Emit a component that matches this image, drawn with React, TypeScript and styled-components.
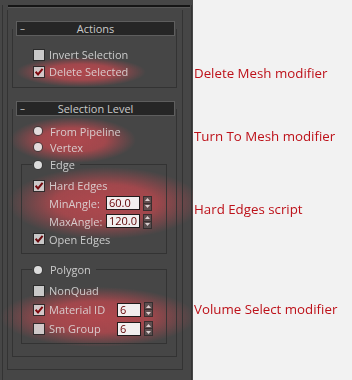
import React from 'react';
import styled, { createGlobalStyle, css } from 'styled-components';

const Global = createGlobalStyle`
  html, body { margin: 0; padding: 0; background: #f2f2f2; }
  #root { width: 352px; height: 380px; }
`;

const Page = styled.div`
  display: flex;
  width: 352px;
  height: 380px;
  background: #f2f2f2;
  overflow: hidden;
`;

const Panel = styled.div`
  position: relative;
  flex: none;
  width: 193px;
  height: 380px;
  background: #464646;
  overflow: hidden;
  font-family: "Open Sans", "Liberation Sans", sans-serif;
  font-size: 11px;
  color: #cbcbcb;
`;

const FrameA = styled.div`
  position: relative;
  box-sizing: border-box;
  margin-left: 2px;
  width: 190px;
  height: 377px;
  border: 1px solid #333;
  border-top: none;
`;

const TopLine = styled.div`
  margin: 5px 1px 0 5px;
  height: 2px;
  background: #151515;
  border-bottom: 1px solid #585858;
`;

const FrameB = styled.div`
  box-sizing: border-box;
  margin: 2px 0 0 4px;
  width: 176px;
  border: 1px solid #333;
  border-top: none;
  padding: 11px 4px 12px 4px;
`;

const Rollout = styled.section<{ $gap?: number }>`
  width: 165px;
  margin-top: ${(p) => p.$gap ?? 0}px;
`;

const RollHeader = styled.div`
  position: relative;
  z-index: 1;
  box-sizing: border-box;
  margin: 0 2px 0 4px;
  height: 15px;
  display: grid;
  grid-template-columns: 14px 1fr 14px;
  align-items: center;
  background: #262626;
  border: 1px solid #5e5e5e;
  font-size: 11px;
  color: #cacaca;
  line-height: 13px;
`;

const Minus = styled.span`
  padding-left: 3px;
  font-size: 10px;
  color: #bdbdbd;
`;

const RollTitle = styled.span`
  text-align: center;
`;

const RollBody = styled.div<{ $pt: number; $pb: number }>`
  margin-top: -7px;
  padding: ${(p) => p.$pt}px 0 ${(p) => p.$pb}px 0;
  border: 1px solid #333;
  border-top: none;
`;

const Row = styled.div<{ $h: number; $pl: number }>`
  display: flex;
  align-items: center;
  height: ${(p) => p.$h}px;
  padding-left: ${(p) => p.$pl}px;
  white-space: nowrap;
`;

const Box = styled.span`
  box-sizing: border-box;
  flex: none;
  width: 12px;
  height: 12px;
  margin-right: 4px;
  background: #c8c8c8;
  border: 1px solid #2b2b2b;
  display: flex;
  align-items: center;
  justify-content: center;
`;

const Dot = styled.span`
  flex: none;
  width: 8px;
  height: 8px;
  border-radius: 50%;
  background: #dcdcdc;
  box-shadow: 0 0 0 1px #3a3a3a;
  margin-right: 8px;
`;

const Label = styled.span<{ $w?: number }>`
  ${(p) => (p.$w ? `width: ${p.$w}px; flex: none;` : '')}
`;

const NumBox = styled.span<{ $w: number }>`
  box-sizing: border-box;
  flex: none;
  width: ${(p) => p.$w}px;
  height: 14px;
  overflow: hidden;
  background: #eeeeee;
  border: 1px solid #1a1a1a;
  color: #3a0000;
  font-size: 11px;
  line-height: 12px;
  padding-left: 2px;
`;

const SpinBtns = styled.span`
  box-sizing: border-box;
  flex: none;
  margin-left: 3px;
  width: 9px;
  height: 15px;
  display: flex;
  flex-direction: column;
  border: 1px solid #2e2e2e;
  background: #4e4e4e;
`;

const SpinHalf = styled.span<{ $top?: boolean }>`
  flex: 1;
  display: flex;
  align-items: center;
  justify-content: center;
  ${(p) => (p.$top ? 'border-bottom: 1px solid #2e2e2e;' : '')}
`;

const Group = styled.fieldset<{ $mt: number; $pt: number }>`
  box-sizing: border-box;
  margin: ${(p) => p.$mt}px 0 0 8px;
  width: 146px;
  min-width: 0;
  padding: ${(p) => p.$pt}px 0 5px 0;
  border: 1px solid #333;
`;

const Legend = styled.legend`
  display: flex;
  align-items: center;
  height: 15px;
  margin-left: 10px;
  padding: 0 5px 0 2px;
  white-space: nowrap;
`;

const Glow = styled.div<{ $over?: boolean }>`
  position: absolute;
  pointer-events: none;
  ${(p) =>
    p.$over
      ? css`
          mix-blend-mode: overlay;
          background: radial-gradient(
            closest-side,
            rgba(250, 130, 136, 0.32) 0%,
            rgba(250, 130, 136, 0.26) 55%,
            rgba(250, 130, 136, 0) 100%
          );
        `
      : css`
          background: radial-gradient(
            closest-side,
            rgba(196, 72, 80, 0.55) 0%,
            rgba(196, 72, 80, 0.48) 50%,
            rgba(196, 72, 80, 0.2) 80%,
            rgba(196, 72, 80, 0) 100%
          );
        `}
`;

const Notes = styled.div`
  display: flex;
  flex-direction: column;
  padding-left: 1px;
  font-family: "Open Sans", "Liberation Sans", sans-serif;
  font-size: 13.3px;
  line-height: 16px;
  color: #bd1119;
`;

const Note = styled.div<{ $mt: number }>`
  margin-top: ${(p) => p.$mt}px;
  white-space: nowrap;
`;

const glows = [
  { left: 16, top: 57, width: 130, height: 30 },
  { left: 10, top: 117, width: 126, height: 46 },
  { left: 8, top: 167, width: 194, height: 72 },
  { left: 0, top: 287, width: 196, height: 60 },
];

function Check({ on }: { on?: boolean }) {
  return (
    <Box>
      {on && (
        <svg width="10" height="10" viewBox="0 0 10 10">
          <path d="M1.6 4.8 L4 7.4 L8.6 1.8" fill="none" stroke="#6a0a0f" strokeWidth="2" />
        </svg>
      )}
    </Box>
  );
}

function Spinner({ value, w }: { value: string; w: number }) {
  return (
    <>
      <NumBox $w={w}>{value}</NumBox>
      <SpinBtns>
        <SpinHalf $top>
          <svg width="5" height="3" viewBox="0 0 5 3">
            <path d="M0 3 L2.5 0 L5 3 Z" fill="#cfcfcf" />
          </svg>
        </SpinHalf>
        <SpinHalf>
          <svg width="5" height="3" viewBox="0 0 5 3">
            <path d="M0 0 L2.5 3 L5 0 Z" fill="#cfcfcf" />
          </svg>
        </SpinHalf>
      </SpinBtns>
    </>
  );
}

export default function App() {
  return (
    <>
      <Global />
      <Page>
        <Panel>
          {glows.map((g, i) => (
            <Glow key={`u${i}`} style={g} />
          ))}
          <FrameA>
            <TopLine />
            <FrameB>
              <Rollout>
                <RollHeader>
                  <Minus>–</Minus>
                  <RollTitle>Actions</RollTitle>
                  <span />
                </RollHeader>
                <RollBody $pt={17} $pb={7}>
                  <Row $h={17} $pl={20}>
                    <Check />
                    <Label>Invert Selection</Label>
                  </Row>
                  <Row $h={17} $pl={20}>
                    <Check on />
                    <Label>Delete Selected</Label>
                  </Row>
                </RollBody>
              </Rollout>

              <Rollout $gap={13}>
                <RollHeader>
                  <Minus>–</Minus>
                  <RollTitle>Selection Level</RollTitle>
                  <span />
                </RollHeader>
                <RollBody $pt={14} $pb={12}>
                  <Row $h={16} $pl={21}>
                    <Dot />
                    <Label>From Pipeline</Label>
                  </Row>
                  <Row $h={16} $pl={21}>
                    <Dot />
                    <Label>Vertex</Label>
                  </Row>

                  <Group $mt={2} $pt={5}>
                    <Legend>
                      <Dot />
                      Edge
                    </Legend>
                    <Row $h={17} $pl={11}>
                      <Check on />
                      <Label>Hard Edges</Label>
                    </Row>
                    <Row $h={18} $pl={27}>
                      <Label $w={57}>MinAngle:</Label>
                      <Spinner value="60.0" w={34} />
                    </Row>
                    <Row $h={18} $pl={27}>
                      <Label $w={57}>MaxAngle:</Label>
                      <Spinner value="120.0" w={34} />
                    </Row>
                    <Row $h={18} $pl={11}>
                      <Check on />
                      <Label>Open Edges</Label>
                    </Row>
                  </Group>

                  <Group $mt={8} $pt={4}>
                    <Legend>
                      <Dot />
                      Polygon
                    </Legend>
                    <Row $h={19} $pl={11}>
                      <Check />
                      <Label>NonQuad</Label>
                    </Row>
                    <Row $h={19} $pl={11}>
                      <Check on />
                      <Label $w={68}>Material ID</Label>
                      <Spinner value="6" w={24} />
                    </Row>
                    <Row $h={19} $pl={11}>
                      <Check />
                      <Label $w={68}>Sm Group</Label>
                      <Spinner value="6" w={24} />
                    </Row>
                  </Group>
                </RollBody>
              </Rollout>
            </FrameB>
          </FrameA>
          {glows.map((g, i) => (
            <Glow key={`o${i}`} $over style={g} />
          ))}
        </Panel>

        <Notes>
          <Note $mt={65}>Delete Mesh modifier</Note>
          <Note $mt={47}>Turn To Mesh modifier</Note>
          <Note $mt={57}>Hard Edges script</Note>
          <Note $mt={84}>Volume Select modifier</Note>
        </Notes>
      </Page>
    </>
  );
}
